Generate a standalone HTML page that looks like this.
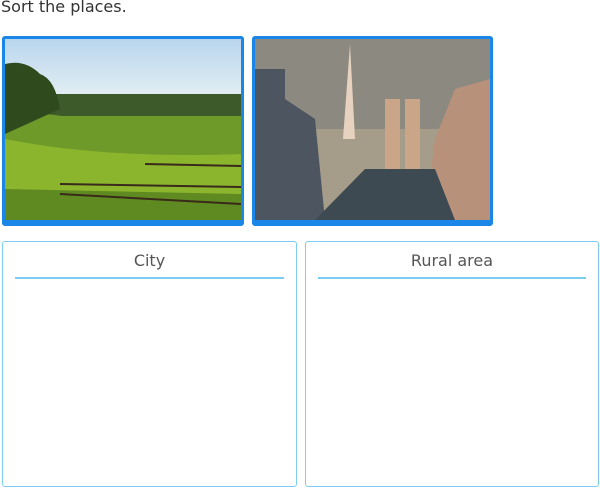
<!DOCTYPE html>
<html><head><style>
body{margin:0;width:600px;height:487px;background:#fff;font-family:"DejaVu Sans","Liberation Sans",sans-serif;position:relative;overflow:hidden}
.t{position:absolute;left:1px;top:-3px;font-size:16px;color:#333}
.card{position:absolute;top:36px;height:181px;border:3px solid #1a86e8;border-bottom-width:6px;border-radius:3px;box-sizing:content-box;overflow:hidden}
.box{position:absolute;top:241px;height:244px;border:1px solid #7ccdf2;border-radius:3px}
.box .h{position:absolute;left:12px;right:12px;top:0;height:35px;border-bottom:2px solid #7ccdf2;text-align:center;line-height:38px;font-size:16px;color:#555}
</style></head><body>
<div class="t">Sort the places.</div>
<div class="card" style="left:2px;width:236px">
<svg width="236" height="181" viewBox="0 0 236 181">
<defs><linearGradient id="s" x1="0" y1="0" x2="0" y2="1"><stop offset="0" stop-color="#b9d6ee"/><stop offset="1" stop-color="#e3eef2"/></linearGradient></defs>
<rect width="236" height="181" fill="#6e9a2a"/>
<rect width="236" height="58" fill="url(#s)"/>
<rect y="55" width="236" height="22" fill="#3d5a2a"/>
<path d="M0 75 Q60 70 120 95 L236 80 L236 181 L0 181Z" fill="#6e9a2a"/>
<path d="M0 100 Q100 120 236 115 L236 181 L0 181Z" fill="#8cb52e"/>
<path d="M0 150 L236 155 L236 181 L0 181Z" fill="#5f8a22"/>
<path d="M0 25 Q20 20 35 35 Q50 40 55 70 L0 95Z" fill="#2f4a1c"/>
<path d="M55 155 L236 165 M55 145 L236 148 M140 125 L236 127" stroke="#3a2a1a" stroke-width="2" fill="none"/>
</svg></div>
<div class="card" style="left:252px;width:235px">
<svg width="235" height="181" viewBox="0 0 235 181">
<rect width="235" height="181" fill="#a59d8a"/>
<rect width="235" height="90" fill="#8c8a80"/>
<path d="M0 30 L30 30 L30 60 L60 80 L70 181 L0 181Z" fill="#4d5560"/>
<path d="M95 5 L100 100 L88 100Z" fill="#e6d2be"/>
<path d="M130 60 L145 60 L145 150 L130 150Z M150 60 L165 60 L165 130 L150 130Z" fill="#caa588"/>
<path d="M180 100 L200 50 L235 40 L235 181 L170 181Z" fill="#b8917a"/>
<path d="M60 181 L110 130 L180 130 L200 181Z" fill="#3e4a52"/>
</svg></div>
<div class="box" style="left:2px;width:293px"><div class="h">City</div></div>
<div class="box" style="left:305px;width:292px"><div class="h">Rural area</div></div>
</body></html>
